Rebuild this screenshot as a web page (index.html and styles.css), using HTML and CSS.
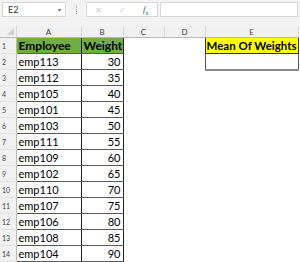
FILE: index.html
```html
<!DOCTYPE html>
<html lang="en">
<head>
    <meta charset="UTF-8">
    <title>Mean Of Weights</title>
    <link rel="stylesheet" href="styles.css">
</head>
<body>

    <div class="toolbar">
        <div class="namebox">
            <span>E2</span>
            <span class="arrow">&#9662;</span>
        </div>
        <div class="grip"></div>
        <div class="fxbox">
            <span class="fx-btn">&#10005;</span>
            <span class="fx-btn">&#10003;</span>
            <span class="fx-btn fx"><i>f</i><sub>x</sub></span>
        </div>
        <div class="formula"></div>
    </div>

    <table class="sheet">
        <colgroup>
            <col style="width:16px">
            <col style="width:65px">
            <col style="width:42px">
            <col style="width:41px">
            <col style="width:41px">
            <col style="width:93px">
        </colgroup>
        <tr class="colhead">
            <th class="corner"><span class="tri"></span></th>
            <th>A</th><th>B</th><th>C</th><th>D</th><th>E</th>
        </tr>
        <tbody id="rows"></tbody>
    </table>

    <script>
        var data = [
            ["emp113", 30], ["emp112", 35], ["emp105", 40], ["emp101", 45],
            ["emp103", 50], ["emp111", 55], ["emp109", 60], ["emp102", 65],
            ["emp110", 70], ["emp107", 75], ["emp106", 80], ["emp108", 85],
            ["emp104", 90]
        ];

        var rows = document.getElementById("rows");
        var html = '<tr><th class="rowhead">1</th>' +
            '<td class="cell head">Employee</td>' +
            '<td class="cell head">Weight</td>' +
            '<td></td><td></td>' +
            '<td class="mean">Mean Of Weights</td></tr>';

        for (var i = 0; i < data.length; i++) {
            html += '<tr><th class="rowhead">' + (i + 2) + '</th>' +
                '<td class="cell">' + data[i][0] + '</td>' +
                '<td class="cell num">' + data[i][1] + '</td>' +
                '<td></td><td></td>' +
                (i === 0 ? '<td class="result"></td>' : '<td></td>') +
                '</tr>';
        }
        rows.innerHTML = html;
    </script>

</body>
</html>
```

FILE: styles.css
```css
body {
    margin: 0;
    background: white;
    font-family: Lato, "Liberation Sans", sans-serif;
}
.toolbar {
    display: flex;
    align-items: flex-start;
    height: 26px;
    padding: 2px 2px 0 2px;
    box-sizing: border-box;
    background-color: #f3f3f3;
}
.namebox {
    display: flex;
    justify-content: space-between;
    align-items: center;
    width: 64px;
    height: 15px;
    padding: 0 4px 0 5px;
    box-sizing: border-box;
    background: white;
    border: 1px solid #d6d6d6;
    font-size: 9px;
    color: #333;
}
.arrow {
    font-size: 6px;
    color: #666;
}
.grip {
    width: 1px;
    height: 9px;
    margin: 3px 8px 0 10px;
    border-left: 1px dotted #9a9a9a;
}
.fxbox {
    display: flex;
    justify-content: space-around;
    align-items: center;
    width: 72px;
    height: 15px;
    box-sizing: border-box;
    background: white;
    border: 1px solid #d6d6d6;
    color: #c8c8c8;
    font-size: 8px;
}
.fx {
    color: #555;
    font-family: "Liberation Serif", serif;
    font-size: 9px;
}
.fx sub {
    font-size: 6px;
}
.formula {
    flex: 1;
    height: 15px;
    margin-left: 2px;
    box-sizing: border-box;
    background: white;
    border: 1px solid #d6d6d6;
}
.sheet {
    border-collapse: collapse;
    table-layout: fixed;
    width: 298px;
}
.colhead th {
    height: 11px;
    padding: 0;
    background-color: #f1f1f1;
    border-right: 1px solid #d8d8d8;
    border-bottom: 1px solid #b8b8b8;
    font-size: 8px;
    font-weight: normal;
    color: #444;
    line-height: 10px;
}
.corner {
    position: relative;
}
.tri {
    position: absolute;
    right: 2px;
    bottom: 2px;
    border-left: 7px solid transparent;
    border-bottom: 7px solid #d0d0d0;
}
.rowhead {
    height: 15px;
    padding: 0 0 0 2px;
    background-color: #f1f1f1;
    border-right: 1px solid #b8b8b8;
    border-bottom: 1px solid #e2e2e2;
    font-size: 7px;
    font-weight: normal;
    color: #444;
    text-align: left;
    line-height: 14px;
}
td {
    padding: 0 2px;
    font-size: 11px;
    line-height: 14px;
    color: black;
    white-space: nowrap;
    overflow: hidden;
}
.cell {
    border-top: 1px solid #5a5a5a;
    border-bottom: 1px solid #5a5a5a;
    border-left: 1px solid #222;
    border-right: 1px solid #222;
}
.head {
    background-color: #70ad47;
    font-weight: bold;
    font-size: 12px;
}
.num {
    text-align: right;
}
.mean {
    padding: 0 1px;
    background-color: yellow;
    border: 1px solid #333;
    font-weight: bold;
    font-size: 11.5px;
}
.result {
    border: 1px solid #555;
    border-bottom: 2px solid #888;
}
```
